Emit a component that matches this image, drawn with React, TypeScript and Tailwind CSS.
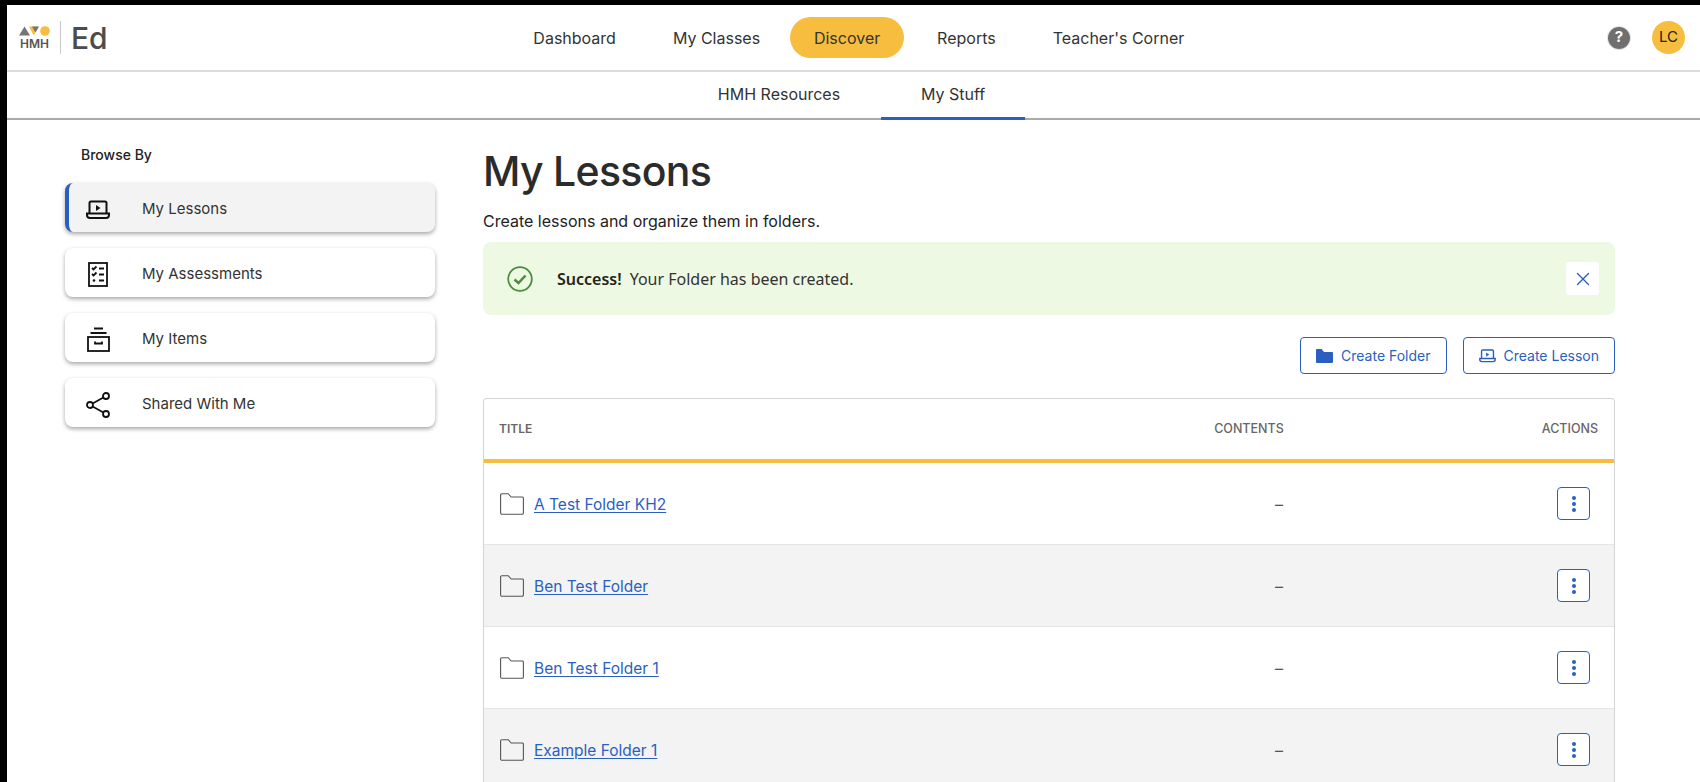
import type { ReactNode } from "react";
import { X } from "lucide-react";

const LaptopIcon = ({ className }: { className?: string }) => (
  <svg viewBox="0 0 24 20" className={className} fill="none" stroke="currentColor" strokeWidth="2">
    <path d="M3.5 13V3a1.500 1.500 0 0 1 1.500-1.500h14A1.500 1.500 0 0 1 20.500 3v10" />
    <path d="M1 13.500h22v1.500a3 3 0 0 1-3 3H4a3 3 0 0 1-3-3z" />
    <path d="M10 5l4.500 3L10 11z" fill="currentColor" stroke="none" />
  </svg>
);

const ChecklistIcon = () => (
  <svg viewBox="0 0 20 25" className="h-[25px] w-[20px]" fill="none" stroke="currentColor" strokeWidth="1.800">
    <rect x="1" y="1" width="18" height="23" />
    <path d="M4 6l1.500 1.500L8.500 4.500M4 12l1.500 1.500L8.500 10.500M11 6.500h5M11 12.500h5M11 18.500h5" />
    <circle cx="6" cy="18.500" r="1.300" fill="currentColor" stroke="none" />
  </svg>
);

const ArchiveIcon = () => (
  <svg viewBox="0 0 23 25" className="h-[25px] w-[23px]" fill="none" stroke="currentColor" strokeWidth="1.800">
    <path d="M7 1.500h9M3.500 6h16" />
    <rect x="1" y="10" width="21" height="14" />
    <path d="M8 14.500v2h7v-2" />
  </svg>
);

const ShareIcon = () => (
  <svg viewBox="0 0 24 26" className="h-[26px] w-[24px]" fill="none" stroke="currentColor" strokeWidth="1.800">
    <circle cx="4" cy="13" r="3" />
    <circle cx="20" cy="4" r="3" />
    <circle cx="20" cy="22" r="3" />
    <path d="M6.600 11.500l10.800-6M6.600 14.500l10.800 6" />
  </svg>
);

const FolderOutline = () => (
  <svg viewBox="0 0 24 22" className="h-[22px] w-[24px] shrink-0 text-[#555]" fill="none" stroke="currentColor" strokeWidth="1.100">
    <path d="M.6 2A1.200 1.200 0 0 1 1.800.7h6.400l3 3.300h10.800a1.200 1.200 0 0 1 1.400 1.200v14.800a1.300 1.300 0 0 1-1.300 1.300H2a1.400 1.400 0 0 1-1.400-1.400z" />
  </svg>
);

const FolderSolid = () => (
  <svg viewBox="0 0 17 14" className="h-[14px] w-[17px]" fill="currentColor">
    <path d="M0 1a1 1 0 0 1 1-1h4.500l2.500 3h8a1 1 0 0 1 1 1v9a1 1 0 0 1-1 1H1a1 1 0 0 1-1-1z" />
  </svg>
);

const Logo = () => (
  <div className="flex items-center">
    <div className="flex w-[31px] flex-col items-center">
      <svg viewBox="0 0 31 10" className="h-[10px] w-[31px]">
        <path d="M0 9.500L5.500 .5l5.500 9z" fill="#757575" />
        <path d="M10 .5h9.500l-4.750 9z" fill="#f7bd3f" />
        <path d="M13 .5h7L16.500 6.500z" fill="#757575" />
        <circle cx="26" cy="5" r="4.800" fill="#f7bd3f" />
      </svg>
      <span className="mt-[2px] text-[12px] leading-[12px] font-semibold text-[#555]">HMH</span>
    </div>
    <div className="mr-[10px] ml-[10px] h-[33px] w-px bg-[#c8c8c8]" />
    <span className="text-[30px] leading-none font-medium text-[#4c4c4c]">Ed</span>
  </div>
);

const NavItem = ({ children, active, className = "" }: { children: ReactNode; active?: boolean; className?: string }) => (
  <a className={`flex h-[41px] items-center rounded-full text-[16px] text-[#333] ${active ? "w-[114px] justify-center bg-[#f7bd3f]" : ""} ${className}`}>
    {children}
  </a>
);

const SideItem = ({ icon, label, active }: { icon: ReactNode; label: string; active?: boolean }) => (
  <div
    className={`flex h-[49px] items-center rounded-[8px] pt-[4px] shadow-[0_2px_4px_rgba(0,0,0,0.35)] ${
      active ? "border-l-4 border-[#2a5fc1] bg-[#f3f3f3] pl-[16px]" : "bg-white pl-[20px]"
    }`}
  >
    <div className="flex w-[26px] justify-center text-[#111]">{icon}</div>
    <span className="ml-[31px] text-[15px] text-[#333]">{label}</span>
  </div>
);

const OutlineButton = ({ icon, label }: { icon: ReactNode; label: string }) => (
  <button className="flex h-[37px] items-center gap-[8px] rounded-[4px] border border-[#2a5fc1] bg-white px-[15px] text-[14px] text-[#2a5fc1]">
    {icon}
    {label}
  </button>
);

const folders = ["A Test Folder KH2", "Ben Test Folder", "Ben Test Folder 1", "Example Folder 1"];

export default function App() {
  return (
    <div className="flex h-[782px] flex-col overflow-hidden bg-black pt-[5px] pl-[7px] font-['Inter',sans-serif]">
      <div className="flex flex-1 flex-col bg-white">
        <header className="flex h-[67px] shrink-0 items-center justify-between border-b-2 border-[#dcdcdc] pr-[15px] pl-[12px]">
          <Logo />
          <nav className="ml-[3px] flex items-center gap-[33px]">
            <NavItem>Dashboard</NavItem>
            <NavItem className="-mr-[3px] ml-[24px]">My Classes</NavItem>
            <NavItem active>Discover</NavItem>
            <NavItem>Reports</NavItem>
            <NavItem className="ml-[24px]">Teacher's Corner</NavItem>
          </nav>
          <div className="flex items-center gap-[21px]">
            <div className="flex h-[24px] w-[24px] items-center justify-center rounded-full border border-[#ddd]">
              <div className="flex h-[22px] w-[22px] items-center justify-center rounded-full bg-[#6f6f6f] text-[15px] font-bold text-white">?</div>
            </div>
            <div className="flex h-[33px] w-[33px] items-center justify-center rounded-full bg-[#f7bd3f] text-[15px] text-[#222]">LC</div>
          </div>
        </header>

        <div className="flex h-[48px] shrink-0 items-stretch justify-center gap-[41px] border-b-2 border-[#aaaaaa] pl-[36px] text-[16px] text-[#333]">
          <a className="flex items-center pb-[2px]">HMH Resources</a>
          <a className="-mb-[2px] flex w-[144px] items-center justify-center border-b-[3px] border-[#2a5fc1] pb-[1px]">My Stuff</a>
        </div>

        <div className="flex flex-1 items-start gap-[48px] pl-[58px]">
          <aside className="w-[370px] shrink-0 pt-[25px]">
            <div className="pl-[16px] text-[14px] leading-[20px] font-medium text-[#222]">Browse By</div>
            <div className="mt-[18px] flex flex-col gap-[16px]">
              <SideItem active label="My Lessons" icon={<LaptopIcon className="h-[20px] w-[24px]" />} />
              <SideItem label="My Assessments" icon={<ChecklistIcon />} />
              <SideItem label="My Items" icon={<ArchiveIcon />} />
              <SideItem label="Shared With Me" icon={<ShareIcon />} />
            </div>
          </aside>

          <main className="w-[1132px] shrink-0 pt-[28px]">
            <h1 className="text-[41px] leading-[46px] font-medium tracking-[-0.7px] text-[#2b2b2b]">My Lessons</h1>
            <p className="mt-[16px] text-[16px] leading-[22px] text-[#222]">Create lessons and organize them in folders.</p>

            <div className="mt-[10px] flex h-[73px] items-center rounded-[8px] bg-[#edf9e3] pr-[16px] pl-[24px] font-['Noto_Sans',sans-serif] text-[16px] text-[#333]">
              <svg viewBox="0 0 26 26" className="h-[26px] w-[26px]" fill="none" stroke="#4a8c3a" strokeWidth="1.800">
                <circle cx="13" cy="13" r="11.800" />
                <path d="M7.500 13.500l4 3.500 7-7.500" strokeWidth="2.500" />
              </svg>
              <b className="ml-[24px] font-semibold text-[#222]">Success!</b>
              <span className="ml-[8px]">Your Folder has been created.</span>
              <button className="ml-auto flex h-[33px] w-[33px] items-center justify-center rounded-[3px] bg-white text-[#2a5fc1]">
                <X size={22} strokeWidth={1.500} />
              </button>
            </div>

            <div className="mt-[22px] flex justify-end gap-[16px]">
              <OutlineButton label="Create Folder" icon={<FolderSolid />} />
              <OutlineButton label="Create Lesson" icon={<LaptopIcon className="h-[14px] w-[17px]" />} />
            </div>

            <div className="mt-[24px] rounded-t-[4px] border border-b-0 border-[#d4d4d4]">
              <div className="flex h-[64px] items-center border-b-4 border-[#f7bd3f] pr-[16px] pl-[15px] text-[12.500px] font-medium text-[#666]">
                <span className="flex-1 text-[12px] font-semibold">TITLE</span>
                <span className="mr-[258px]">CONTENTS</span>
                <span>ACTIONS</span>
              </div>
              {folders.map((name, i) => (
                <div key={name} className={`flex h-[82px] items-center border-b border-[#e6e6e6] pr-[24px] pl-[16px] ${i % 2 ? "bg-[#f3f3f3]" : "bg-white"}`}>
                  <FolderOutline />
                  <a className="ml-[10px] flex-1 pt-[3px] text-[15.500px] text-[#2a5fc1] underline underline-offset-2">{name}</a>
                  <span className="mr-[274px] text-[16px] text-[#555]">–</span>
                  <button className="flex h-[33px] w-[33px] items-center justify-center rounded-[4px] border border-[#2a5fc1] bg-white text-[#2a5fc1]">
                    <svg viewBox="0 0 6 18" className="h-[18px] w-[6px]" fill="currentColor">
                      <circle cx="3" cy="3" r="2" />
                      <circle cx="3" cy="9" r="2" />
                      <circle cx="3" cy="15" r="2" />
                    </svg>
                  </button>
                </div>
              ))}
            </div>
          </main>
        </div>
      </div>
    </div>
  );
}
